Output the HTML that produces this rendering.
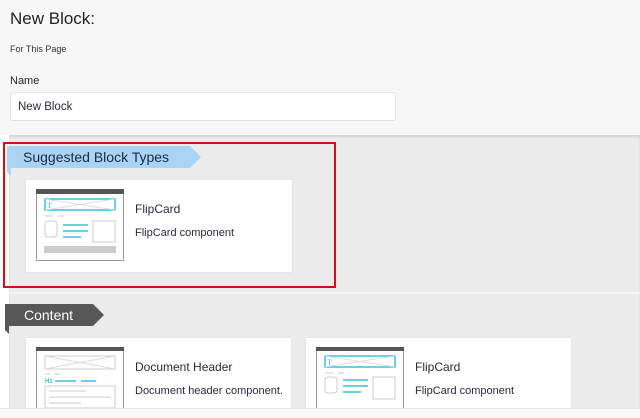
<!DOCTYPE html>
<html><head><style>
*{margin:0;padding:0;box-sizing:border-box}
body{width:640px;height:418px;overflow:hidden;background:#f7f7f7;font-family:"Liberation Sans",sans-serif;color:#222;position:relative}
.a{position:absolute}
.card{position:absolute;background:#fff;box-shadow:0 0 2px rgba(0,0,0,.08)}
.t1{font-size:12px;color:#2a2a40}
.t2{font-size:11px;color:#2a2a40}
</style></head><body>
<div class="a" style="left:10px;top:9px;font-size:17px;color:#222">New Block:</div>
<div class="a" style="left:10px;top:44px;font-size:9px;color:#333">For This Page</div>
<div class="a" style="left:10px;top:75px;font-size:11px;color:#222">Name</div>
<div class="a" style="left:10px;top:92px;width:386px;height:29px;background:#fff;border:1px solid #e2e2e2;border-radius:3px;font-size:11.5px;color:#2a2a40;padding:8px 0 0 7px">New Block</div>
<div class="a" style="left:0;top:135px;width:640px;height:283px;background:#fff"></div>
<div class="a" style="left:9px;top:135px;width:631px;height:273px;background:#ececec;box-shadow:inset 0 2px 2px rgba(0,0,0,.1)"></div>
<div class="a" style="left:9px;top:292px;width:631px;height:2px;background:#f6f6f6"></div>
<div class="a" style="left:3px;top:142px;width:333px;height:146px;border:2px solid #d0101a"></div>
<svg class="a" style="left:6px;top:146px" width="196" height="32"><polygon points="1,0 184,0 195,11 184,22 5,22 5,30 1,26" fill="#a9d4f5"/></svg>
<div class="a" style="left:23px;top:149px;font-size:14px;color:#1d2a44">Suggested Block Types</div>
<svg class="a" style="left:4px;top:304px" width="102" height="32"><polygon points="1,0 89,0 100,11 89,22 5,22 5,30 1,26" fill="#575757"/></svg>
<div class="a" style="left:24px;top:307px;font-size:14px;color:#fff">Content</div>

<div class="card" style="left:26px;top:180px;width:266px;height:92px"></div>
<svg class="a" style="left:36px;top:189px" width="88" height="72"><rect x="0.5" y="0.5" width="87" height="71" fill="#fff" stroke="#999"/><rect x="0" y="0" width="88" height="5" fill="#555"/><rect x="9" y="10" width="70" height="11" fill="none" stroke="#3bbfdc" stroke-width="1.5"/><line x1="9" y1="10" x2="79" y2="21" stroke="#ddd"/><line x1="9" y1="21" x2="79" y2="10" stroke="#ddd"/><text x="11" y="19" font-size="8" fill="#3bbfdc" font-family="Liberation Serif">T</text><line x1="9" y1="27" x2="17" y2="27" stroke="#ccc"/><line x1="22" y1="27" x2="28" y2="27" stroke="#ccc"/><rect x="9" y="32" width="12" height="16" rx="3" fill="none" stroke="#ccc"/><line x1="27" y1="36" x2="52" y2="36" stroke="#3bbfdc" stroke-width="1.5"/><line x1="27" y1="42" x2="52" y2="42" stroke="#3bbfdc" stroke-width="1.5"/><line x1="27" y1="48" x2="45" y2="48" stroke="#3bbfdc" stroke-width="1.5"/><rect x="57" y="32" width="22" height="21" fill="none" stroke="#ccc"/><rect x="8" y="57" width="72" height="7" fill="#ccc"/></svg>
<div class="a t1" style="left:135px;top:202px">FlipCard</div>
<div class="a t2" style="left:135px;top:227px">FlipCard component</div>

<div class="card" style="left:26px;top:338px;width:265px;height:72px"></div>
<svg class="a" style="left:36px;top:347px" width="88" height="62"><rect x="0.5" y="0.5" width="87" height="70" fill="#fff" stroke="#999"/><rect x="0" y="0" width="88" height="4" fill="#555"/><rect x="9" y="9" width="70" height="13" fill="none" stroke="#ccc"/><line x1="9" y1="9" x2="79" y2="22" stroke="#ddd"/><line x1="9" y1="22" x2="79" y2="9" stroke="#ddd"/><line x1="9" y1="27" x2="14" y2="27" stroke="#ccc"/><line x1="18" y1="27" x2="24" y2="27" stroke="#ccc"/><text x="9" y="36" font-size="6" fill="#3bbfdc" font-weight="bold">H1</text><line x1="19" y1="34" x2="40" y2="34" stroke="#3bbfdc" stroke-width="1.5"/><line x1="45" y1="34" x2="60" y2="34" stroke="#3bbfdc" stroke-width="1.5"/><rect x="9" y="39" width="70" height="22" fill="none" stroke="#ccc"/><line x1="13" y1="44" x2="50" y2="44" stroke="#ccc"/><line x1="13" y1="50" x2="75" y2="50" stroke="#ccc"/><line x1="13" y1="56" x2="45" y2="56" stroke="#ccc"/></svg>
<div class="a t1" style="left:135px;top:360px">Document Header</div>
<div class="a t2" style="left:135px;top:385px">Document header component.</div>

<div class="card" style="left:306px;top:338px;width:265px;height:72px"></div>
<svg class="a" style="left:316px;top:347px" width="88" height="62"><rect x="0.5" y="0.5" width="87" height="70" fill="#fff" stroke="#999"/><rect x="0" y="0" width="88" height="4" fill="#555"/><rect x="9" y="9" width="70" height="11" fill="none" stroke="#3bbfdc" stroke-width="1.5"/><line x1="9" y1="9" x2="79" y2="20" stroke="#ddd"/><line x1="9" y1="20" x2="79" y2="9" stroke="#ddd"/><text x="11" y="18" font-size="8" fill="#3bbfdc" font-family="Liberation Serif">T</text><line x1="9" y1="26" x2="17" y2="26" stroke="#ccc"/><line x1="22" y1="26" x2="28" y2="26" stroke="#ccc"/><rect x="9" y="30" width="12" height="16" rx="3" fill="none" stroke="#ccc"/><line x1="27" y1="33" x2="52" y2="33" stroke="#3bbfdc" stroke-width="1.5"/><line x1="27" y1="39" x2="52" y2="39" stroke="#3bbfdc" stroke-width="1.5"/><line x1="27" y1="45" x2="45" y2="45" stroke="#3bbfdc" stroke-width="1.5"/><rect x="57" y="30" width="22" height="22" fill="none" stroke="#ccc"/></svg>
<div class="a t1" style="left:415px;top:360px">FlipCard</div>
<div class="a t2" style="left:415px;top:385px">FlipCard component</div>
<div class="a" style="left:0;top:408px;width:640px;height:10px;background:#fafafa;border-top:1px solid #e4e4e4"></div>
</body></html>
